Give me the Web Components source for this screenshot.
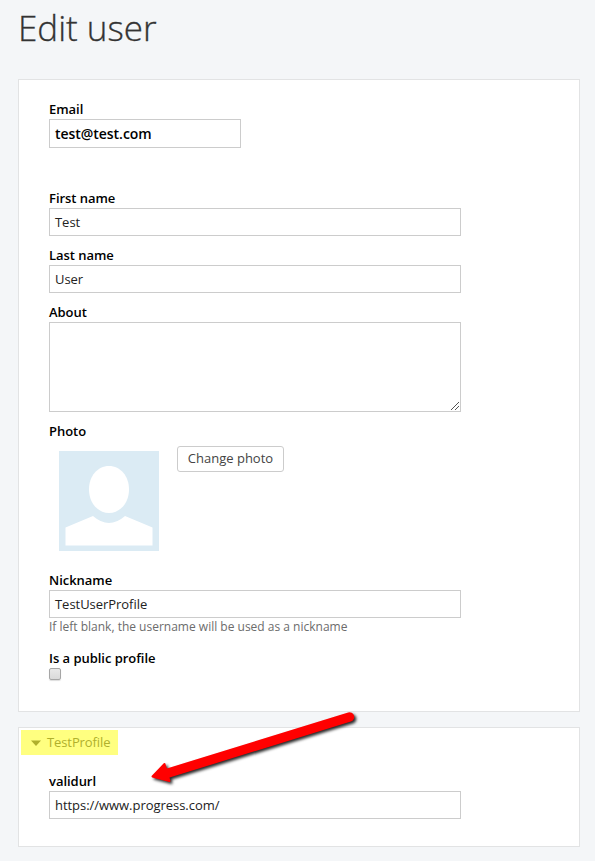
<!DOCTYPE html>
<html lang="en">
<head>
<meta charset="utf-8">
<title>Edit user</title>
<style>
   body {
      margin: 0;
      padding: 5px 15px 14px 18px;
      height: 842px;
      overflow: hidden;
      background: #f4f6f8;
      color: #000;
      font: 13px/18px "Open Sans", "Noto Sans", sans-serif;
   }
</style>
</head>
<body>

<page-title>Edit user</page-title>

<form-card id="main">
   <form-field label="Email"><text-box kind="email">test@test.com</text-box></form-field>
   <form-field label="First name"><text-box>Test</text-box></form-field>
   <form-field label="Last name"><text-box>User</text-box></form-field>
   <form-field label="About"><text-box kind="area"></text-box></form-field>
   <form-field label="Photo"><photo-picker>Change photo</photo-picker></form-field>
   <form-field label="Nickname" hint="If left blank, the username will be used as a nickname"><text-box>TestUserProfile</text-box></form-field>
   <form-field label="Is a public profile"><check-box></check-box></form-field>
</form-card>

<form-card id="profile">
   <section-toggle slot="head">TestProfile</section-toggle>
   <form-field label="validurl"><text-box>https://www.progress.com/</text-box></form-field>
</form-card>

<pointer-arrow></pointer-arrow>

<script>
// registers an element whose shadow root is filled from a template string
function define( selector, styles, template ) {
   customElements.define( selector, class extends HTMLElement {
      constructor() { super();
         const templateEl = document.createElement( 'template' );
         templateEl.innerHTML = '<style>' + styles + '</style>' + template;
         this.attachShadow( { mode: 'open' } ).appendChild( templateEl.content.cloneNode( true ) );
      }
   })
}

define( 'page-title', `
   :host { display: block; height: 74px; }
   h1 { margin: 0; font-size: 35px; line-height: 46px; font-weight: 300; color: #333; -webkit-text-stroke: .3px #333; }
`, '<h1><slot></slot></h1>' );

define( 'form-card', `
   :host { display: block; box-sizing: border-box; width: 562px; border: 1px solid #e2e3e4; background: #fff; }
   :host(#main) { height: 633px; }
   :host(#profile) { height: 120px; margin-top: 15px; }
   .fields { display: flex; flex-direction: column; gap: 10px; padding: 20px 30px; }
   :host(#profile) .fields { padding-top: 17px; }
`, '<slot name="head"></slot><div class="fields"><slot></slot></div>' );

define( 'text-box', `
   :host { display: block; box-sizing: border-box; width: 412px; height: 28px; padding: 0 5px;
      border: 1px solid #ccc; background: #fff; color: #222; line-height: 27px; letter-spacing: -.04px; white-space: nowrap; }
   :host([kind=email]) { width: 192px; height: 29px; margin-bottom: 31px; font-size: 14px; font-weight: 600; color: #000; line-height: 28px; }
   :host([kind=area]) { display: flex; justify-content: flex-end; align-items: flex-end; height: 90px; padding: 0 1px 1px 0; }
   svg { display: none; }
   :host([kind=area]) svg { display: block; }
`, `<slot></slot><svg width="8" height="8" shape-rendering="crispEdges" stroke="#555"><path d="M0 8L8 0M4 8L8 4"/></svg>` );

define( 'check-box', `
   :host { display: block; box-sizing: border-box; width: 12px; height: 12px; border: 1px solid #a6a6a6; border-radius: 2px;
      background: linear-gradient(#e9e9e9, #dadada); box-shadow: 0 1px 1px #ddd; }
`, '' );

define( 'photo-picker', `
   :host { display: flex; gap: 18px; height: 120px; padding-left: 10px; }
   svg { margin-top: 10px; }
   button { height: 26px; width: 107px; margin: 5px 0 0; padding: 0 0 2px; border: 1px solid #ccc; border-radius: 3px;
      background: #fff; color: #444; font: inherit; line-height: 22px; }
`, `<svg width="100" height="100">
      <path fill="#dbebf4" d="M0 0h100v100H0z"/>
      <g fill="#fff">
         <path d="M50 15c11.500 0 20 10 20 23.500S61 62 50 62 30 52 30 38.500 38.500 15 50 15z"/>
         <path d="M6.500 76.500L34 65q16 14 32 0l27.500 11.500v18h-87z"/>
      </g>
   </svg><button><slot></slot></button>` );

define( 'section-toggle', `
   :host { display: flex; align-items: center; box-sizing: border-box; width: 97px; height: 25px; margin: 2px 0 0 2px; padding-left: 10px; gap: 6px;
      background: #ffff80; color: #b0b02c; }
   span { line-height: 24px; margin-top: -2px; letter-spacing: -.1px; }
`, '<svg width="10" height="6" fill="#b0b02c"><path d="M0 .5h10L5 6z"/></svg><span><slot></slot></span>' );

// callout drawn over the cards
define( 'pointer-arrow', `
   :host { position: absolute; left: 145px; top: 705px; pointer-events: none; }
   svg { display: block; overflow: visible; filter: drop-shadow(2px 2.500px 1.500px rgba(0,0,0,.85)); }
`, `<svg width="220" height="85" fill="#f00" stroke="#f00" stroke-linejoin="round">
      <path d="M204.500 12L20 69" stroke-width="9.500" stroke-linecap="round"/>
      <path d="M7.500 71.500L19.500 59 24.500 76z" stroke-width="2"/>
   </svg>` );

customElements.define( 'form-field', class extends HTMLElement {
   constructor() { super();
      this.attachShadow( { mode: 'open' } ).innerHTML = `<style>
         :host { display: block; }
         label { display: block; margin-bottom: 1px; font-weight: 600; letter-spacing: -.04px; }
         .hint { height: 21px; font-size: 12px; line-height: 17px; color: #6c6c6c; }
         .hint:empty { display: none; }
      </style><label></label><slot></slot><div class="hint"></div>`;
      this.shadowRoot.querySelector( 'label' ).textContent = this.getAttribute( 'label' );
      this.shadowRoot.querySelector( '.hint' ).textContent = this.getAttribute( 'hint' ) || '';
   }
});
</script>
</body>
</html>
